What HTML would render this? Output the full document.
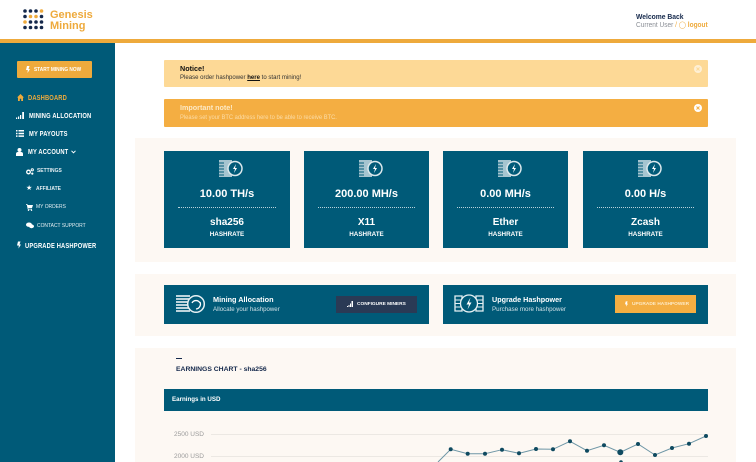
<!DOCTYPE html>
<html><head><meta charset="utf-8">
<style>
*{box-sizing:border-box;margin:0;padding:0}
html,body{width:756px;height:462px;overflow:hidden;background:#fff;font-family:"Liberation Sans",sans-serif}
.a{position:absolute;white-space:nowrap;transform-origin:0 50%}
.b{font-weight:bold}
.nav{color:#fff;font-weight:bold;font-size:7.5px;letter-spacing:.2px;transform:scaleX(.77)}
.sub{color:#e4eef2;font-size:5.5px;font-weight:bold;transform:scaleX(.9)}
.card{position:absolute;top:151px;height:97px;background:#005a78;color:#fff;text-align:center}
.card .v{position:absolute;top:37px;left:0;right:0;font-size:11px;font-weight:bold}
.card .l{position:absolute;left:14px;right:14px;top:56px;border-top:1px dotted #b9d2db}
.card .n{position:absolute;top:65.5px;left:0;right:0;font-size:10px;font-weight:bold}
.card .h{position:absolute;top:80px;left:0;right:0;font-size:6.3px;font-weight:bold}
.card svg{position:absolute;left:54px;top:8px}
.wide{position:absolute;top:285px;height:39px;background:#005a78;color:#fff}
</style></head><body>

<!-- Header -->
<svg class="a" style="left:23px;top:9px" width="21" height="21" viewBox="0 0 21 21">
<g fill="#14284b">
<circle cx="2" cy="2" r="1.8"/><circle cx="7.5" cy="2" r="1.8"/><circle cx="13" cy="2" r="1.8"/>
<circle cx="2" cy="7.5" r="1.8"/><circle cx="18.5" cy="7.5" r="1.8"/>
<circle cx="7.5" cy="13" r="1.8"/><circle cx="13" cy="13" r="1.8"/><circle cx="18.5" cy="13" r="1.8"/>
<circle cx="2" cy="18.5" r="1.8"/><circle cx="7.5" cy="18.5" r="1.8"/><circle cx="13" cy="18.5" r="1.8"/><circle cx="18.5" cy="18.5" r="1.8"/>
</g>
<g fill="#eeaa3c">
<circle cx="18.5" cy="2" r="1.8"/><circle cx="7.5" cy="7.5" r="1.8"/><circle cx="13" cy="7.5" r="1.8"/>
<circle cx="2" cy="13" r="1.8"/>
</g>
</svg>
<div class="a b" style="left:50px;top:9.5px;font-size:11px;line-height:11px;color:#eeaa3c">Genesis<br>Mining</div>

<div class="a b" style="left:636px;top:12px;font-size:7.5px;color:#14284b;transform:scaleX(.9)">Welcome Back</div>
<div class="a" style="left:636px;top:21px;font-size:7px;color:#8b8f96;transform:scaleX(.93)">Current User <span style="color:#eeaa3c">/ ◯ <b>logout</b></span></div>

<div class="a" style="left:0;top:39px;width:756px;height:4px;background:#eeaa3c"></div>

<!-- Sidebar -->
<div class="a" style="left:0;top:43px;width:115px;height:419px;background:#005a78"></div>
<div class="a" style="left:17px;top:61px;width:75px;height:17px;background:#eeaa3c;border-radius:1px"></div>
<svg class="a" style="left:26px;top:66px" width="4" height="7" viewBox="0 0 4 7"><path d="M1 0h2.5L2.5 3H4L1.5 7l.3-3H0z" fill="#fff"/></svg>
<div class="a b" style="left:34px;top:66.5px;font-size:5.2px;color:#fff;transform:scaleX(.92)">START MINING NOW</div>

<svg class="a" style="left:17px;top:94px" width="7" height="7" viewBox="0 0 7 7"><path d="M3.5 0L7 3.5H6V7H4.2V4.8H2.8V7H1V3.5H0z" fill="#eeaa3c"/></svg>
<div class="a nav" style="left:28px;top:93px;color:#eeaa3c">DASHBOARD</div>

<svg class="a" style="left:16px;top:112px" width="8" height="7" viewBox="0 0 8 7"><path d="M0 5.5h1.2V7H0zM2 4.5h1.2V7H2zM4 3h1.2v4H4zM6.2 0H8v7H6.2z" fill="#fff"/></svg>
<div class="a nav" style="left:28.5px;top:111px">MINING ALLOCATION</div>

<svg class="a" style="left:16px;top:130px" width="8" height="7" viewBox="0 0 8 7"><path d="M0 0h1.5v1.5H0zM2.5 0H8v1.5H2.5zM0 2.7h1.5v1.5H0zM2.5 2.7H8v1.5H2.5zM0 5.4h1.5v1.5H0zM2.5 5.4H8v1.5H2.5z" fill="#fff"/></svg>
<div class="a nav" style="left:28.5px;top:129px">MY PAYOUTS</div>

<svg class="a" style="left:16px;top:148px" width="7" height="8" viewBox="0 0 7 8"><circle cx="3.5" cy="2" r="2" fill="#fff"/><path d="M0 8V6q0-2 2-2h3q2 0 2 2v2z" fill="#fff"/></svg>
<div class="a nav" style="left:27.5px;top:147px">MY ACCOUNT</div>
<svg class="a" style="left:71px;top:150px" width="5" height="4" viewBox="0 0 5 4"><path d="M.5 .8L2.5 2.8 4.5 .8" stroke="#fff" fill="none" stroke-width="1"/></svg>

<svg class="a" style="left:26px;top:168px" width="8" height="7" viewBox="0 0 8 7"><circle cx="2.5" cy="4" r="1.8" fill="none" stroke="#fff" stroke-width="1.3"/><circle cx="6.3" cy="1.8" r="1.1" fill="none" stroke="#fff"/><circle cx="6.3" cy="5.6" r="1.1" fill="#fff"/></svg>
<div class="a sub" style="left:37px;top:168px">SETTINGS</div>
<div class="a" style="left:26px;top:185px;font-size:7px;line-height:8px;color:#fff">★</div>
<div class="a sub" style="left:36px;top:186px">AFFILIATE</div>
<svg class="a" style="left:26px;top:204px" width="7" height="7" viewBox="0 0 7 7"><path d="M0 0h1.3l.4 1H7L6 4H2.2l.2 .8H6v.7H1.8L.8 .7H0z" fill="#fff"/><circle cx="2.5" cy="6.3" r=".7" fill="#fff"/><circle cx="5.5" cy="6.3" r=".7" fill="#fff"/></svg>
<div class="a sub" style="left:36px;top:204px;font-weight:normal">MY ORDERS</div>
<svg class="a" style="left:26px;top:222px" width="8" height="7" viewBox="0 0 8 7"><ellipse cx="3" cy="2.7" rx="3" ry="2.2" fill="#fff"/><ellipse cx="5.5" cy="4.3" rx="2.5" ry="1.9" fill="#fff"/></svg>
<div class="a sub" style="left:37px;top:222.5px;font-weight:normal">CONTACT SUPPORT</div>
<svg class="a" style="left:17px;top:241px" width="4" height="8" viewBox="0 0 4 7"><path d="M1 0h2.5L2.5 3H4L1.5 7l.3-3H0z" fill="#fff"/></svg>
<div class="a nav" style="left:25px;top:241px">UPGRADE HASHPOWER</div>

<!-- Alerts -->
<div class="a" style="left:164px;top:60px;width:544px;height:27px;background:#fdd996;border-radius:1px"></div>
<div class="a b" style="left:180px;top:64px;font-size:7.2px;color:#111">Notice!</div>
<div class="a" style="left:180px;top:74px;font-size:6.5px;color:#333;transform:scaleX(.93)">Please order hashpower <b style="color:#111;text-decoration:underline">here</b> to start mining!</div>
<svg class="a" style="left:694px;top:65px" width="8" height="8" viewBox="0 0 8 8"><circle cx="4" cy="4" r="4" fill="#fff" opacity=".6"/><path d="M2.5 2.5l3 3M5.5 2.5l-3 3" stroke="#fdd996" stroke-width="1"/></svg>

<div class="a" style="left:164px;top:99px;width:544px;height:28px;background:#f4ae42;border-radius:1px"></div>
<div class="a b" style="left:180px;top:103px;font-size:7.2px;color:#fde9c4">Important note!</div>
<div class="a" style="left:180px;top:113.5px;font-size:6.5px;color:#fbdca6;transform:scaleX(.89)">Please set your BTC address here to be able to receive BTC.</div>
<svg class="a" style="left:694px;top:104px" width="8" height="8" viewBox="0 0 8 8"><circle cx="4" cy="4" r="4" fill="#fff"/><path d="M2.5 2.5l3 3M5.5 2.5l-3 3" stroke="#f4ae42" stroke-width="1"/></svg>

<!-- Panels -->
<div class="a" style="left:135px;top:138px;width:601px;height:124px;background:#fdf8f3"></div>
<div class="a" style="left:135px;top:274px;width:601px;height:62px;background:#fdf8f3"></div>
<div class="a" style="left:135px;top:348px;width:601px;height:114px;background:#fdf8f3"></div>

<!-- Cards -->
<div class="card" style="left:164px;width:126px">
<svg width="26" height="19" viewBox="0 0 26 19"><path d="M1 1h13v17H1z" fill="#cfe0e6" opacity=".8"/><path d="M1 4h5M1 7h5M1 10h5M1 13h5M1 16h5" stroke="#005a78"/><circle cx="17" cy="9.5" r="7" fill="#005a78" stroke="#dbe8ec" stroke-width="1.5"/><path d="M18 5l-3 5h2l-1 4 3-5h-2z" fill="#fff"/></svg>
<div class="v">10.00 TH/s</div><div class="l"></div><div class="n">sha256</div><div class="h">HASHRATE</div></div>
<div class="card" style="left:304px;width:125px">
<svg width="26" height="19" viewBox="0 0 26 19"><path d="M1 1h13v17H1z" fill="#cfe0e6" opacity=".8"/><path d="M1 4h5M1 7h5M1 10h5M1 13h5M1 16h5" stroke="#005a78"/><circle cx="17" cy="9.5" r="7" fill="#005a78" stroke="#dbe8ec" stroke-width="1.5"/><path d="M18 5l-3 5h2l-1 4 3-5h-2z" fill="#fff"/></svg>
<div class="v">200.00 MH/s</div><div class="l"></div><div class="n">X11</div><div class="h">HASHRATE</div></div>
<div class="card" style="left:443px;width:125px">
<svg width="26" height="19" viewBox="0 0 26 19"><path d="M1 1h13v17H1z" fill="#cfe0e6" opacity=".8"/><path d="M1 4h5M1 7h5M1 10h5M1 13h5M1 16h5" stroke="#005a78"/><circle cx="17" cy="9.5" r="7" fill="#005a78" stroke="#dbe8ec" stroke-width="1.5"/><path d="M18 5l-3 5h2l-1 4 3-5h-2z" fill="#fff"/></svg>
<div class="v">0.00 MH/s</div><div class="l"></div><div class="n">Ether</div><div class="h">HASHRATE</div></div>
<div class="card" style="left:583px;width:125px">
<svg width="26" height="19" viewBox="0 0 26 19"><path d="M1 1h13v17H1z" fill="#cfe0e6" opacity=".8"/><path d="M1 4h5M1 7h5M1 10h5M1 13h5M1 16h5" stroke="#005a78"/><circle cx="17" cy="9.5" r="7" fill="#005a78" stroke="#dbe8ec" stroke-width="1.5"/><path d="M18 5l-3 5h2l-1 4 3-5h-2z" fill="#fff"/></svg>
<div class="v">0.00 H/s</div><div class="l"></div><div class="n">Zcash</div><div class="h">HASHRATE</div></div>

<!-- Wide cards -->
<div class="wide" style="left:164px;width:265px">
<svg class="a" style="left:12px;top:9px" width="29" height="20" viewBox="0 0 29 20"><path d="M0 2h14M0 5h14M0 8h12M0 11h12M0 14h14M0 17h14" stroke="#d8e6ea" stroke-width="1.8"/><circle cx="20" cy="10" r="8.3" fill="#005a78" stroke="#e6f0f3" stroke-width="1.5"/><path d="M16 9a4.5 4.5 0 0 1 8 0M24 8a5 5 0 0 1-4 7" stroke="#fff" fill="none" stroke-width="1.3"/></svg>
<div class="a b" style="left:49px;top:10px;font-size:7.3px">Mining Allocation</div>
<div class="a" style="left:49px;top:20.5px;font-size:6.1px;color:#cfe0e6">Allocate your hashpower</div>
<div class="a" style="left:172px;top:11px;width:81px;height:17px;background:#2a3a55"></div>
<svg class="a" style="left:183px;top:16px" width="6" height="6" viewBox="0 0 6 6"><path d="M0 5h1v1H0zM1.5 4h1v2h-1zM3 2.5h1V6H3zM4.5 0H6v6H4.5z" fill="#fff"/></svg>
<div class="a b" style="left:193px;top:16.5px;font-size:4.8px;color:#fff">CONFIGURE MINERS</div>
</div>
<div class="wide" style="left:443px;width:265px">
<svg class="a" style="left:11px;top:8px" width="30" height="21" viewBox="0 0 30 21"><path d="M1 3h7v15H1zM22 3h7v15h-7z" fill="none" stroke="#e6f0f3" stroke-width="1.3"/><path d="M1 7h7M1 10.5h7M1 14h7M22 7h7M22 10.5h7M22 14h7" stroke="#e6f0f3"/><circle cx="15" cy="10.5" r="8.5" fill="#005a78" stroke="#e6f0f3" stroke-width="1.3"/><path d="M16.5 4.5l-4 7h2.5l-1.5 5 4-7H15z" fill="#fff"/></svg>
<div class="a b" style="left:49px;top:10px;font-size:7.2px">Upgrade Hashpower</div>
<div class="a" style="left:49px;top:20.5px;font-size:6.2px;color:#cfe0e6">Purchase more hashpower</div>
<div class="a" style="left:172px;top:10px;width:81px;height:18px;background:#f4ae42"></div>
<svg class="a" style="left:182px;top:16px" width="3" height="6" viewBox="0 0 4 7"><path d="M1 0h2.5L2.5 3H4L1.5 7l.3-3H0z" fill="#fff"/></svg>
<div class="a b" style="left:189px;top:16.5px;font-size:4.8px;color:#fde9c4">UPGRADE HASHPOWER</div>
</div>

<!-- Chart -->
<div class="a" style="left:176px;top:358px;width:6px;height:1px;background:#14284b"></div>
<div class="a b" style="left:176px;top:366px;font-size:6.8px;color:#14284b">EARNINGS CHART - sha256</div>
<div class="a" style="left:164px;top:389px;width:544px;height:22px;background:#005a78"></div>
<div class="a b" style="left:172px;top:396px;font-size:6.2px;color:#fff">Earnings in USD</div>
<div class="a" style="left:174px;top:431px;font-size:6.5px;color:#9a9a9a">2500 USD</div>
<div class="a" style="left:174px;top:452.5px;font-size:6.5px;color:#9a9a9a">2000 USD</div>
<svg class="a" style="left:0;top:0" width="756" height="462" viewBox="0 0 756 462">
<path d="M211 434.5H708M211 456.5H708" stroke="#ece8e3" stroke-width="1"/>
<polyline fill="none" stroke="#6e96a6" stroke-width="1" points="438,462 450.7,449.3 467.7,453.7 485,453.7 502,449.7 519,453.3 536,449 553,449.3 570,441.3 587,450.7 604,445.3 620.3,452.3 638,444 655,455 672,448 689,443.7 706,436"/>
<g fill="#0f4a60">
<circle cx="450.7" cy="449.3" r="2"/><circle cx="467.7" cy="453.7" r="2"/><circle cx="485" cy="453.7" r="2"/><circle cx="502" cy="449.7" r="2"/><circle cx="519" cy="453.3" r="2"/><circle cx="536" cy="449" r="2"/><circle cx="553" cy="449.3" r="2"/><circle cx="570" cy="441.3" r="2"/><circle cx="587" cy="450.7" r="2"/><circle cx="604" cy="445.3" r="2"/><circle cx="620.3" cy="452.3" r="3"/><circle cx="638" cy="444" r="2"/><circle cx="655" cy="455" r="2"/><circle cx="672" cy="448" r="2"/><circle cx="689" cy="443.7" r="2"/><circle cx="706" cy="436" r="2"/>
<circle cx="621" cy="462" r="1.8"/>
</g>
</svg>
</body></html>
